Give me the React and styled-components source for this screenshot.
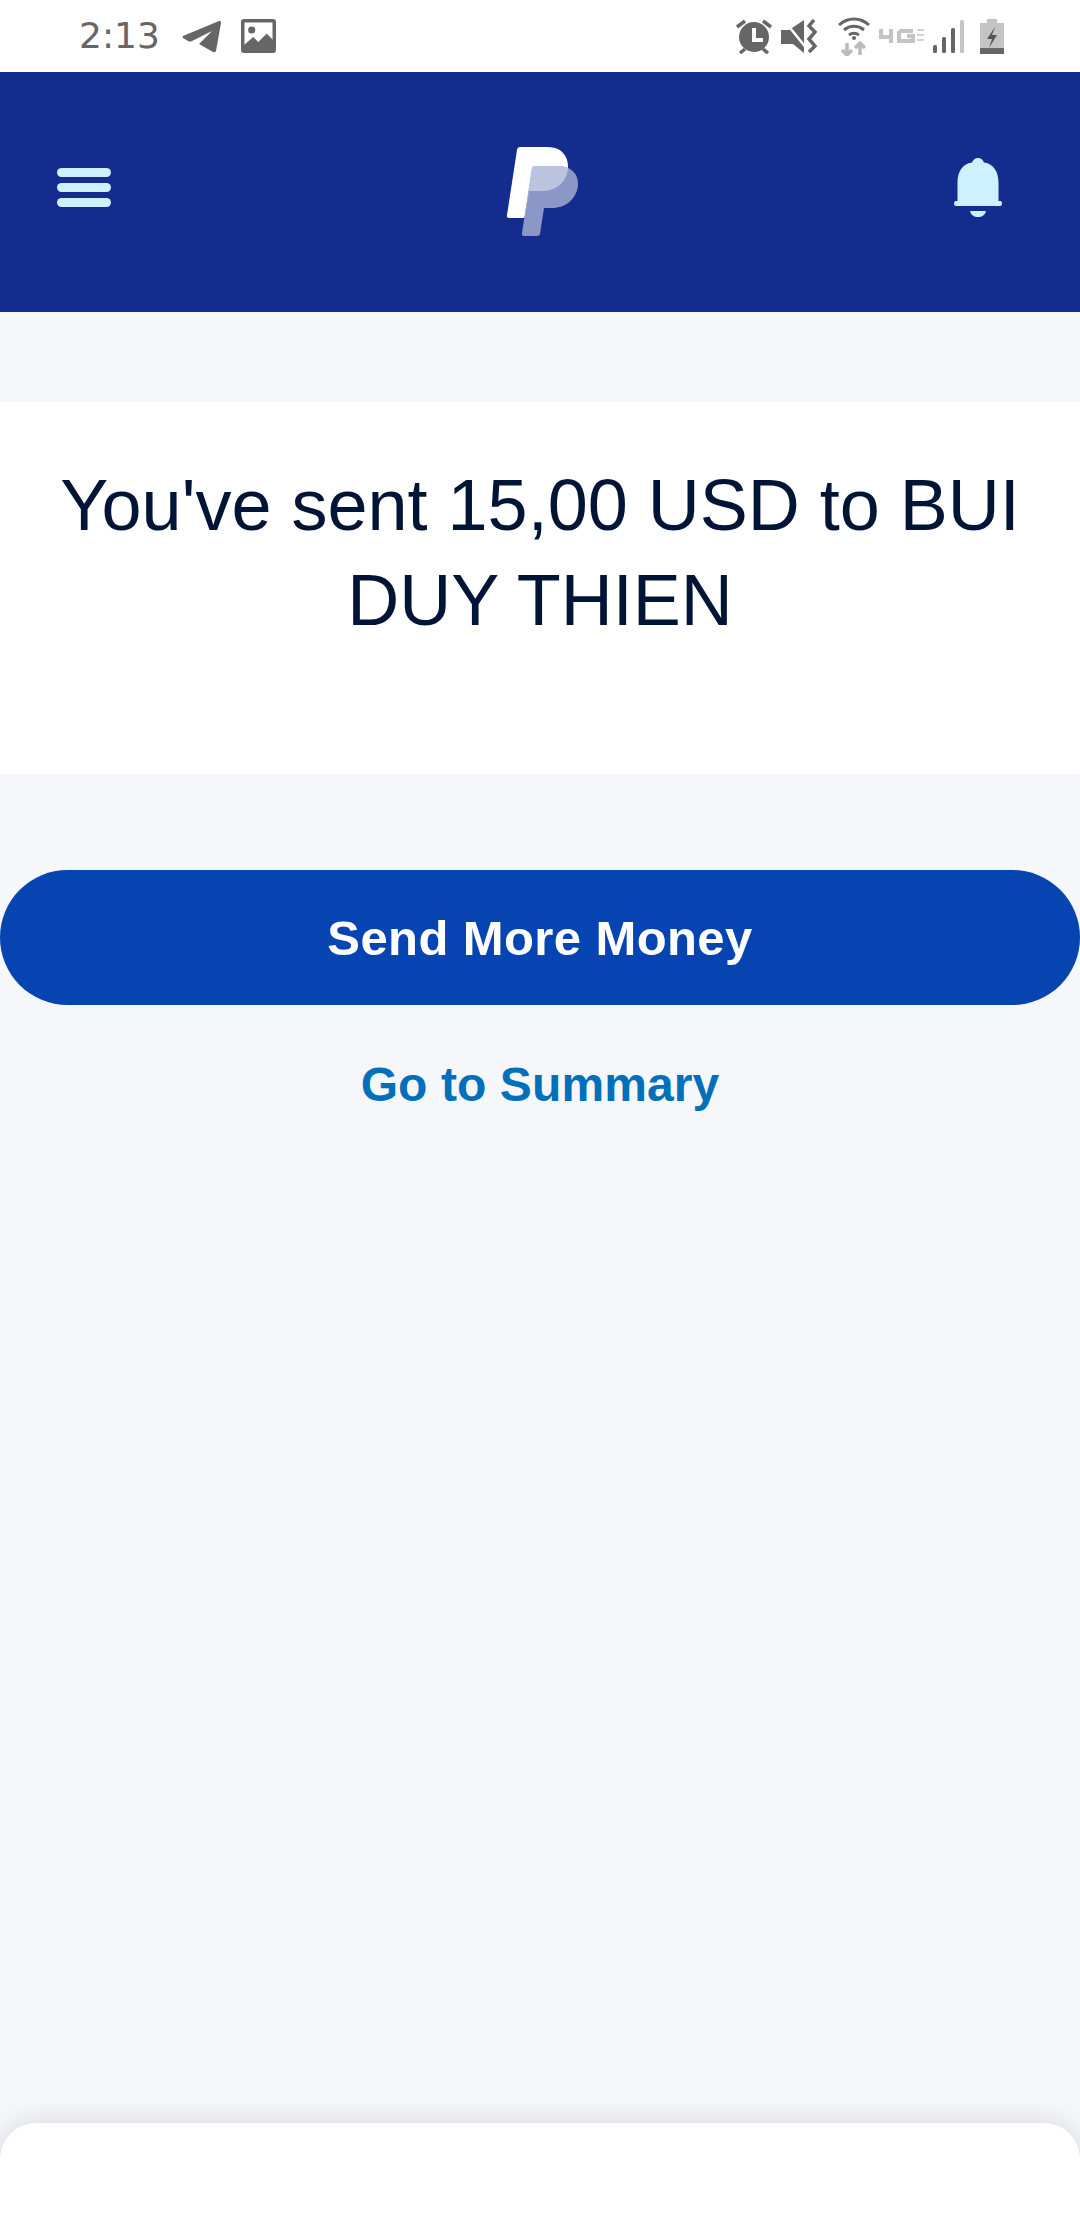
import React from "react";
import styled, { createGlobalStyle } from "styled-components";

const GlobalStyle = createGlobalStyle`
  html, body {
    margin: 0;
    padding: 0;
    background: #f5f7fa;
  }
  * {
    box-sizing: border-box;
  }
`;

const Screen = styled.div`
  width: 1080px;
  height: 2220px;
  overflow: hidden;
  display: flex;
  flex-direction: column;
  background: #f5f7fa;
  font-family: "Liberation Sans", Arial, sans-serif;
`;

const StatusBar = styled.div`
  height: 72px;
  flex: none;
  background: #fff;
  display: flex;
  align-items: center;
  justify-content: space-between;
  padding: 0 76px 0 79px;
`;

const StatusGroup = styled.div`
  display: flex;
  align-items: center;
  gap: ${(p) => p.$gap || 12}px;
  margin-left: ${(p) => p.$offset || 0}px;
`;

const Clock = styled.span`
  font-family: "DejaVu Sans", sans-serif;
  font-size: 36px;
  line-height: 40px;
  color: #666;
  margin-right: 2px;
`;

const Header = styled.header`
  height: 240px;
  flex: none;
  background: #142c8e;
  display: grid;
  grid-template-columns: 1fr auto 1fr;
  align-items: center;
  padding: 0 56px 10px;
`;

const MenuSlot = styled.div`
  display: flex;
  justify-self: start;
  margin-left: 1px;
`;

const LogoSlot = styled.div`
  display: flex;
  margin-top: 9px;
`;

const BellSlot = styled.div`
  display: flex;
  justify-self: end;
  margin-right: 22px;
`;

const Message = styled.section`
  margin-top: 90px;
  height: 372px;
  flex: none;
  background: #fff;
  padding: 56px 40px 0;
`;

const Title = styled.h1`
  margin: 0;
  font-size: 72px;
  line-height: 95px;
  font-weight: 400;
  text-align: center;
  color: #001435;
`;

const PrimaryButton = styled.button`
  margin-top: 96px;
  height: 135px;
  flex: none;
  width: 100%;
  border: 0;
  border-radius: 68px;
  background: #0645b1;
  color: #fff;
  font-family: inherit;
  font-size: 49px;
  font-weight: 700;
  letter-spacing: 0.4px;
`;

const SummaryLink = styled.a`
  margin-top: 53px;
  text-align: center;
  font-size: 48px;
  line-height: 54px;
  font-weight: 700;
  letter-spacing: 0.1px;
  color: #0070ba;
`;

const Spacer = styled.div`
  flex: 1;
`;

const BottomSheet = styled.div`
  height: 97px;
  flex: none;
  background: #fff;
  border-radius: 36px 36px 0 0;
  box-shadow: 0 0 28px rgba(0, 0, 0, 0.14);
`;

const Menu = () => (
  <svg width="54" height="39" viewBox="0 0 54 39">
    <g fill="#cdf1ff">
      <rect width="54" height="9" y="0" rx="4.5" />
      <rect width="54" height="9" y="15" rx="4.5" />
      <rect width="54" height="9" y="30" rx="4.5" />
    </g>
  </svg>
);

const WHITE_P =
  "M50 26H78C92 26 99 36 98 48C96 62 86 70 72 70H59L55 95Q55 97 53 97H39Q36 97 37 94L47 29Q47.5 26 50 26Z";
const BACK_P =
  "M65 45H88C100 45 109 52 108 65C106 78 96 87 82 87H74L70 113Q69.5 115 67 115H54Q51.5 115 52 112L62 47Q62.5 45 65 45Z";

const Logo = () => (
  <svg width="80" height="94" viewBox="30 24 80 94">
    <defs>
      <clipPath id="back-p">
        <path d={BACK_P} />
      </clipPath>
    </defs>
    <path d={WHITE_P} fill="#fff" />
    <path d={BACK_P} fill="#8b97c7" />
    <path d={WHITE_P} fill="#bcc3de" clipPath="url(#back-p)" />
  </svg>
);

const Bell = () => (
  <svg width="48" height="59" viewBox="0 0 48 59">
    <path
      d="M24 0C27 0 29 2 30 4.5C40 6 44.5 14 44.5 25V43H46.5Q48 43 48 45.5Q48 48 46 48H2Q0 48 0 45.5Q0 43 1.5 43H3.5V25C3.5 14 8 6 18 4.5C19 2 21 0 24 0Z"
      fill="#cdf1ff"
    />
    <path d="M16 53H32C31 57 28 59 24 59C20 59 17 57 16 53Z" fill="#cdf1ff" />
  </svg>
);

const Telegram = () => (
  <svg width="39" height="33" viewBox="0 0 39 33">
    <path
      d="M1 16L37 1Q39 0 39 3L34 31Q33 33 31 32L17 24L30 11L10 21Q8 22 6 21L1 18Q0 17 1 16Z"
      fill="#666"
    />
  </svg>
);

const ImageIcon = () => (
  <svg width="35" height="34" viewBox="0 0 35 34">
    <rect width="35" height="34" rx="3" fill="#666" />
    <rect x="3.5" y="3.5" width="28" height="27" fill="#fff" />
    <circle cx="10.7" cy="11" r="3.6" fill="#666" />
    <path d="M3 26L12.3 18L17.3 23L25.7 14.5L32 21V31H3Z" fill="#666" />
  </svg>
);

const Alarm = () => (
  <svg width="38" height="35" viewBox="0 0 38 35">
    <circle cx="19" cy="18" r="15" fill="#666" />
    <path d="M17 9h4v10h7v4H17z" fill="#fff" />
    <path d="M2 8l8-6M36 8l-8-6M5 34l5-4M33 34l-5-4" stroke="#666" strokeWidth="3.5" fill="none" />
  </svg>
);

const Muted = () => (
  <svg width="36" height="35" viewBox="0 0 36 35">
    <path d="M0 11h8L23 1v33L12 25H0z" fill="#666" />
    <path d="M2 0l24 30" stroke="#fff" strokeWidth="2.5" />
    <path d="M33 1l-5 6 6 6-6 7 6 7-6 6" stroke="#666" strokeWidth="3.5" fill="none" />
  </svg>
);

const Wifi = () => (
  <svg width="32" height="40" viewBox="0 0 32 40">
    <path d="M1 9c9-8 21-8 30 0M6 14c6-5 14-5 20 0M11 19c3-2 7-2 10 0" stroke="#666" strokeWidth="3" fill="none" />
    <circle cx="16" cy="22" r="2" fill="#666" />
    <path d="M9 27v12M4 34l5 5 5-5M22 39V27M17 32l5-5 5 5" stroke="#bbb" strokeWidth="3.5" fill="none" />
  </svg>
);

const FourG = () => (
  <svg width="45" height="14" viewBox="0 0 45 14">
    <path d="M2 0v8h10M12 0v14M20 2h14M20 2v10h14V7h-6" stroke="#c4c4c4" strokeWidth="4" fill="none" />
    <path d="M38 1h7M38 6h7M38 11h7" stroke="#c4c4c4" strokeWidth="1.5" />
  </svg>
);

const Signal = () => (
  <svg width="31" height="33" viewBox="0 0 31 33">
    <rect x="0" y="25" width="4" height="8" rx="1.5" fill="#666" />
    <rect x="9" y="17" width="4" height="16" rx="1.5" fill="#666" />
    <rect x="18" y="8" width="4" height="25" rx="1.5" fill="#666" />
    <rect x="27" y="0" width="4" height="33" rx="1.5" fill="#c4c4c4" />
  </svg>
);

const Battery = () => (
  <svg width="24" height="35" viewBox="0 0 24 35">
    <path d="M7 0h10v4h7v26H0V4h7z" fill="#c4c4c4" />
    <rect y="29" width="24" height="6" fill="#666" />
    <path d="M15 8L7 20h5l-3 9 8-13h-5z" fill="#555" />
  </svg>
);

const App = () => {
  return (
    <Screen>
      <GlobalStyle />
      <StatusBar>
        <StatusGroup $gap={20}>
          <Clock>2:13</Clock>
          <Telegram />
          <ImageIcon />
        </StatusGroup>
        <StatusGroup $gap={16}>
          <StatusGroup $gap={8}>
            <Alarm />
            <Muted />
          </StatusGroup>
          <StatusGroup $gap={9} $offset={5}>
            <Wifi />
            <FourG />
            <Signal />
          </StatusGroup>
          <Battery />
        </StatusGroup>
      </StatusBar>
      <Header>
        <MenuSlot>
          <Menu />
        </MenuSlot>
        <LogoSlot>
          <Logo />
        </LogoSlot>
        <BellSlot>
          <Bell />
        </BellSlot>
      </Header>
      <Message>
        <Title>You've sent 15,00 USD to BUI DUY THIEN</Title>
      </Message>
      <PrimaryButton>Send More Money</PrimaryButton>
      <SummaryLink>Go to Summary</SummaryLink>
      <Spacer />
      <BottomSheet />
    </Screen>
  );
};

export default App;
